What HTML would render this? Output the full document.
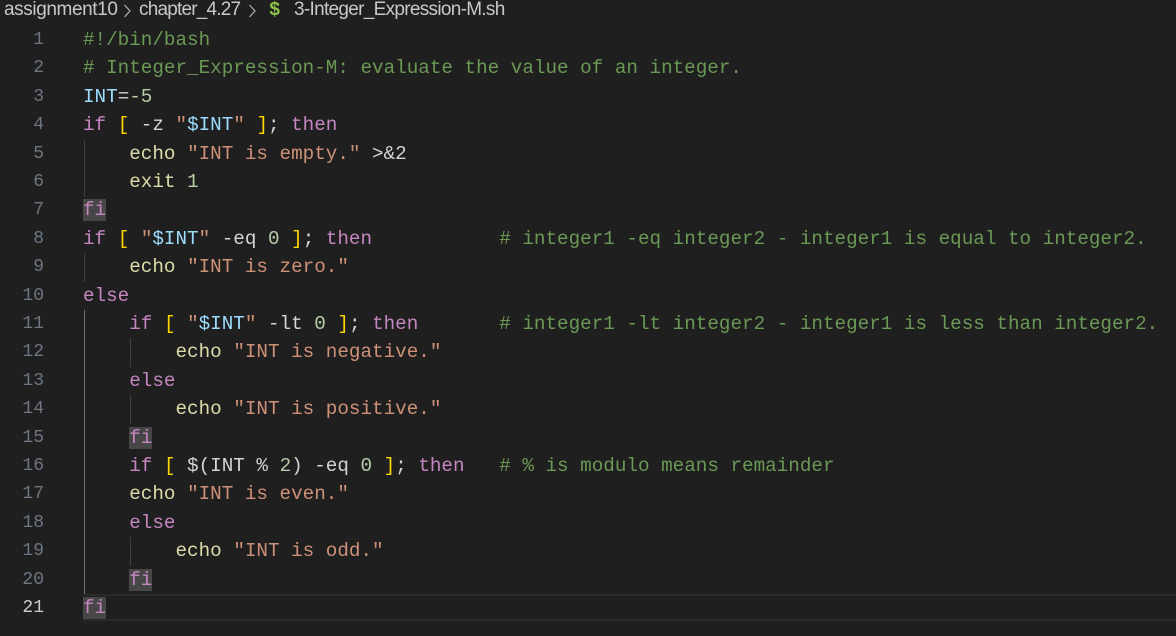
<!DOCTYPE html>
<html><head><meta charset="utf-8"><style>
body{margin:0;width:1176px;height:636px;background:#1f1f1f;overflow:hidden;position:relative;font-family:"Liberation Mono",monospace;}
.bc{position:absolute;top:-1px;height:24px;line-height:22px;font-family:"Liberation Sans",sans-serif;font-size:19px;color:#c8c8c8;white-space:pre;letter-spacing:-0.4px}
.d{color:#8dc149;font-weight:bold;font-family:"Liberation Mono",monospace}
svg.ch{position:absolute;top:4px}
.ln{position:absolute;left:0;width:44px;text-align:right;color:#6e7681;font-size:18px;height:28.4px;line-height:28.4px}
.l{position:absolute;left:83px;font-size:19.27px;height:28.4px;line-height:28.4px;white-space:pre;color:#d4d4d4}
.c{color:#6a9955}.k{color:#c586c0}.s{color:#ce9178}.v{color:#9cdcfe}.n{color:#b5cea8}.b{color:#ffd700}.e{color:#dcdcaa}
.fi{background:#474747}
.g{position:absolute;width:1px;background:#404040}
.cur{position:absolute;left:83px;right:0;top:594px;height:27px;border-top:2px solid #2a2a2a;border-bottom:2px solid #2a2a2a;box-sizing:border-box}
</style></head><body>
<div class="bc" style="left:4px">assignment10</div>
<svg class="ch" style="left:123px" width="9" height="14"><polyline points="1.5,1 7,7 1.5,13" fill="none" stroke="#b0b0b0" stroke-width="1.2"/></svg>
<div class="bc" style="left:139px;letter-spacing:-0.8px">chapter_4.27</div>
<svg class="ch" style="left:248px" width="9" height="14"><polyline points="1.5,1 7,7 1.5,13" fill="none" stroke="#b0b0b0" stroke-width="1.2"/></svg>
<div class="bc d" style="left:269px">$</div>
<div class="bc" style="left:294px;letter-spacing:-0.7px">3-Integer_Expression-M.sh</div>
<div class="cur"></div>
<div class="g" style="left:84px;top:140px;height:57px"></div>
<div class="g" style="left:84px;top:253px;height:29px"></div>
<div class="g" style="left:84px;top:310px;height:284px;background:#707070"></div>
<div class="g" style="left:130px;top:338px;height:29px"></div>
<div class="g" style="left:130px;top:395px;height:29px"></div>
<div class="g" style="left:130px;top:537px;height:29px"></div>
<div class="ln" style="top:26px">1</div><div class="l" style="top:26px"><span class="c">#!/bin/bash</span></div>
<div class="ln" style="top:54.4px">2</div><div class="l" style="top:54.4px"><span class="c"># Integer_Expression-M: evaluate the value of an integer.</span></div>
<div class="ln" style="top:82.8px">3</div><div class="l" style="top:82.8px"><span class="v">INT</span>=<span class="n">-5</span></div>
<div class="ln" style="top:111.2px">4</div><div class="l" style="top:111.2px"><span class="k">if</span> <span class="b">[</span> -z <span class="s">"</span><span class="v">$INT</span><span class="s">"</span> <span class="b">]</span>; <span class="k">then</span></div>
<div class="ln" style="top:139.6px">5</div><div class="l" style="top:139.6px">    <span class="e">echo</span> <span class="s">"INT is empty."</span> &gt;&amp;2</div>
<div class="ln" style="top:168px">6</div><div class="l" style="top:168px">    <span class="e">exit</span> <span class="n">1</span></div>
<div class="ln" style="top:196.4px">7</div><div class="l" style="top:196.4px"><span class="k fi">fi</span></div>
<div class="ln" style="top:224.8px">8</div><div class="l" style="top:224.8px"><span class="k">if</span> <span class="b">[</span> <span class="s">"</span><span class="v">$INT</span><span class="s">"</span> -eq <span class="n">0</span> <span class="b">]</span>; <span class="k">then</span>           <span class="c"># integer1 -eq integer2 - integer1 is equal to integer2.</span></div>
<div class="ln" style="top:253.2px">9</div><div class="l" style="top:253.2px">    <span class="e">echo</span> <span class="s">"INT is zero."</span></div>
<div class="ln" style="top:281.6px">10</div><div class="l" style="top:281.6px"><span class="k">else</span></div>
<div class="ln" style="top:310px">11</div><div class="l" style="top:310px">    <span class="k">if</span> <span class="b">[</span> <span class="s">"</span><span class="v">$INT</span><span class="s">"</span> -lt <span class="n">0</span> <span class="b">]</span>; <span class="k">then</span>       <span class="c"># integer1 -lt integer2 - integer1 is less than integer2.</span></div>
<div class="ln" style="top:338.4px">12</div><div class="l" style="top:338.4px">        <span class="e">echo</span> <span class="s">"INT is negative."</span></div>
<div class="ln" style="top:366.8px">13</div><div class="l" style="top:366.8px">    <span class="k">else</span></div>
<div class="ln" style="top:395.2px">14</div><div class="l" style="top:395.2px">        <span class="e">echo</span> <span class="s">"INT is positive."</span></div>
<div class="ln" style="top:423.6px">15</div><div class="l" style="top:423.6px">    <span class="k fi">fi</span></div>
<div class="ln" style="top:452px">16</div><div class="l" style="top:452px">    <span class="k">if</span> <span class="b">[</span> $(INT % <span class="n">2</span>) -eq <span class="n">0</span> <span class="b">]</span>; <span class="k">then</span>   <span class="c"># % is modulo means remainder</span></div>
<div class="ln" style="top:480.4px">17</div><div class="l" style="top:480.4px">    <span class="e">echo</span> <span class="s">"INT is even."</span></div>
<div class="ln" style="top:508.8px">18</div><div class="l" style="top:508.8px">    <span class="k">else</span></div>
<div class="ln" style="top:537.2px">19</div><div class="l" style="top:537.2px">        <span class="e">echo</span> <span class="s">"INT is odd."</span></div>
<div class="ln" style="top:565.6px">20</div><div class="l" style="top:565.6px">    <span class="k fi">fi</span></div>
<div class="ln" style="top:594px;color:#cccccc">21</div><div class="l" style="top:594px"><span class="k fi">fi</span></div>
</body></html>
